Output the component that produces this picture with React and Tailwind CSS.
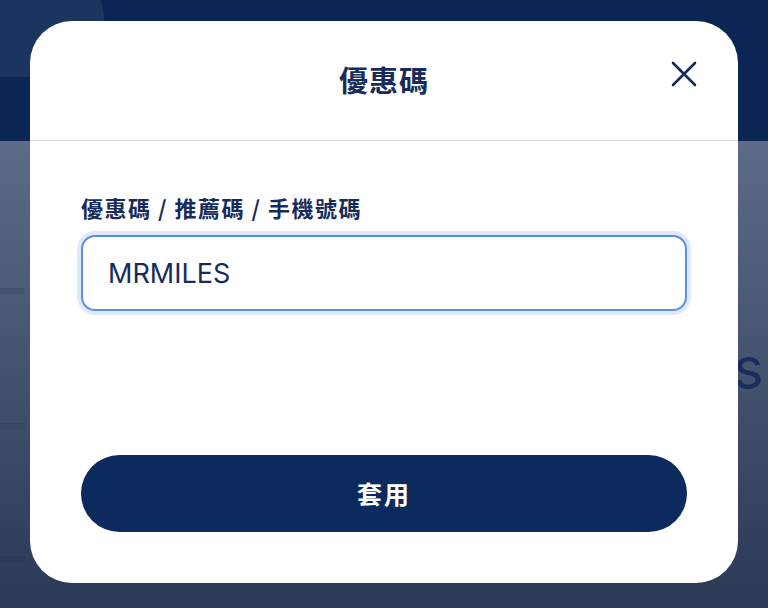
import React, { useState } from 'react';

const cjk = { fontFamily: '"Noto Sans CJK TC", "Noto Sans", sans-serif' };

const CloseIcon = () => (
  <svg width="26" height="26" viewBox="0 0 26 26" fill="none">
    <path d="M2 2L24 24M24 2L2 24" stroke="#132b5c" strokeWidth="2.6" strokeLinecap="round" />
  </svg>
);

// Page sitting behind the dimmed overlay
const Backdrop = () => (
  <div className="absolute inset-0 flex flex-col">
    <div className="relative h-[141px] bg-[#0b2654] overflow-hidden">
      <div className="absolute left-0 -top-[40px] w-[104px] h-[117px] rounded-tr-[60px] bg-white/[0.07]" />
    </div>
    <div className="relative flex-1 bg-gradient-to-b from-[#5d6c86] to-[#2a3955]">
      <div className="absolute left-0 top-[147px] w-[25px] h-[6px] rounded-r-full bg-[#3e4d69]/60" />
      <div className="absolute left-0 top-[282px] w-[25px] h-[6px] rounded-r-full bg-[#35445f]/70" />
      <div className="absolute left-0 top-[415px] w-[25px] h-[6px] rounded-r-full bg-[#2b3a55]/80" />
      <div
        className="absolute left-[733px] top-[198px] text-[58px] leading-none text-[#1a2d58]"
        style={{ fontFamily: 'Inter, sans-serif' }}
      >
        s
      </div>
    </div>
  </div>
);

export default function App() {
  const [code, setCode] = useState('MRMILES');

  return (
    <div className="relative w-full h-[608px] overflow-hidden">
      <Backdrop />

      <div className="absolute left-[30px] top-[21px] w-[708px] h-[562px] bg-white rounded-[42px] flex flex-col">
        {/* Header */}
        <div className="relative h-[120px] flex items-center justify-center border-b border-[#d3d8e3]">
          <h2 className="text-[29px] tracking-[1px] font-bold text-[#172c5a] -mt-[1px]" style={cjk}>
            優惠碼
          </h2>
          <button className="absolute right-[41px] top-[40px] w-[26px] h-[26px]">
            <CloseIcon />
          </button>
        </div>

        {/* Body */}
        <div className="flex-1 flex flex-col px-[51px] pt-[50px] pb-[51px]">
          <label className="text-[22px] tracking-[1.5px] font-bold text-[#172c5a] leading-[32px]" style={cjk}>
            優惠碼 / 推薦碼 / 手機號碼
          </label>
          <input
            value={code}
            onChange={(e) => setCode(e.target.value)}
            className="mt-[12px] h-[76px] w-full rounded-[14px] border-2 border-[#5a8de6] ring-4 ring-[#dfe9fb] px-[25px] text-[27px] text-[#172c5a] outline-none"
            style={{ fontFamily: 'Inter, sans-serif' }}
          />
          <div className="flex-1" />
          <button
            className="h-[77px] w-full rounded-full bg-[#0c2a5e] text-white text-[25px] tracking-[2px] font-bold"
            style={cjk}
          >
            套用
          </button>
        </div>
      </div>
    </div>
  );
}
